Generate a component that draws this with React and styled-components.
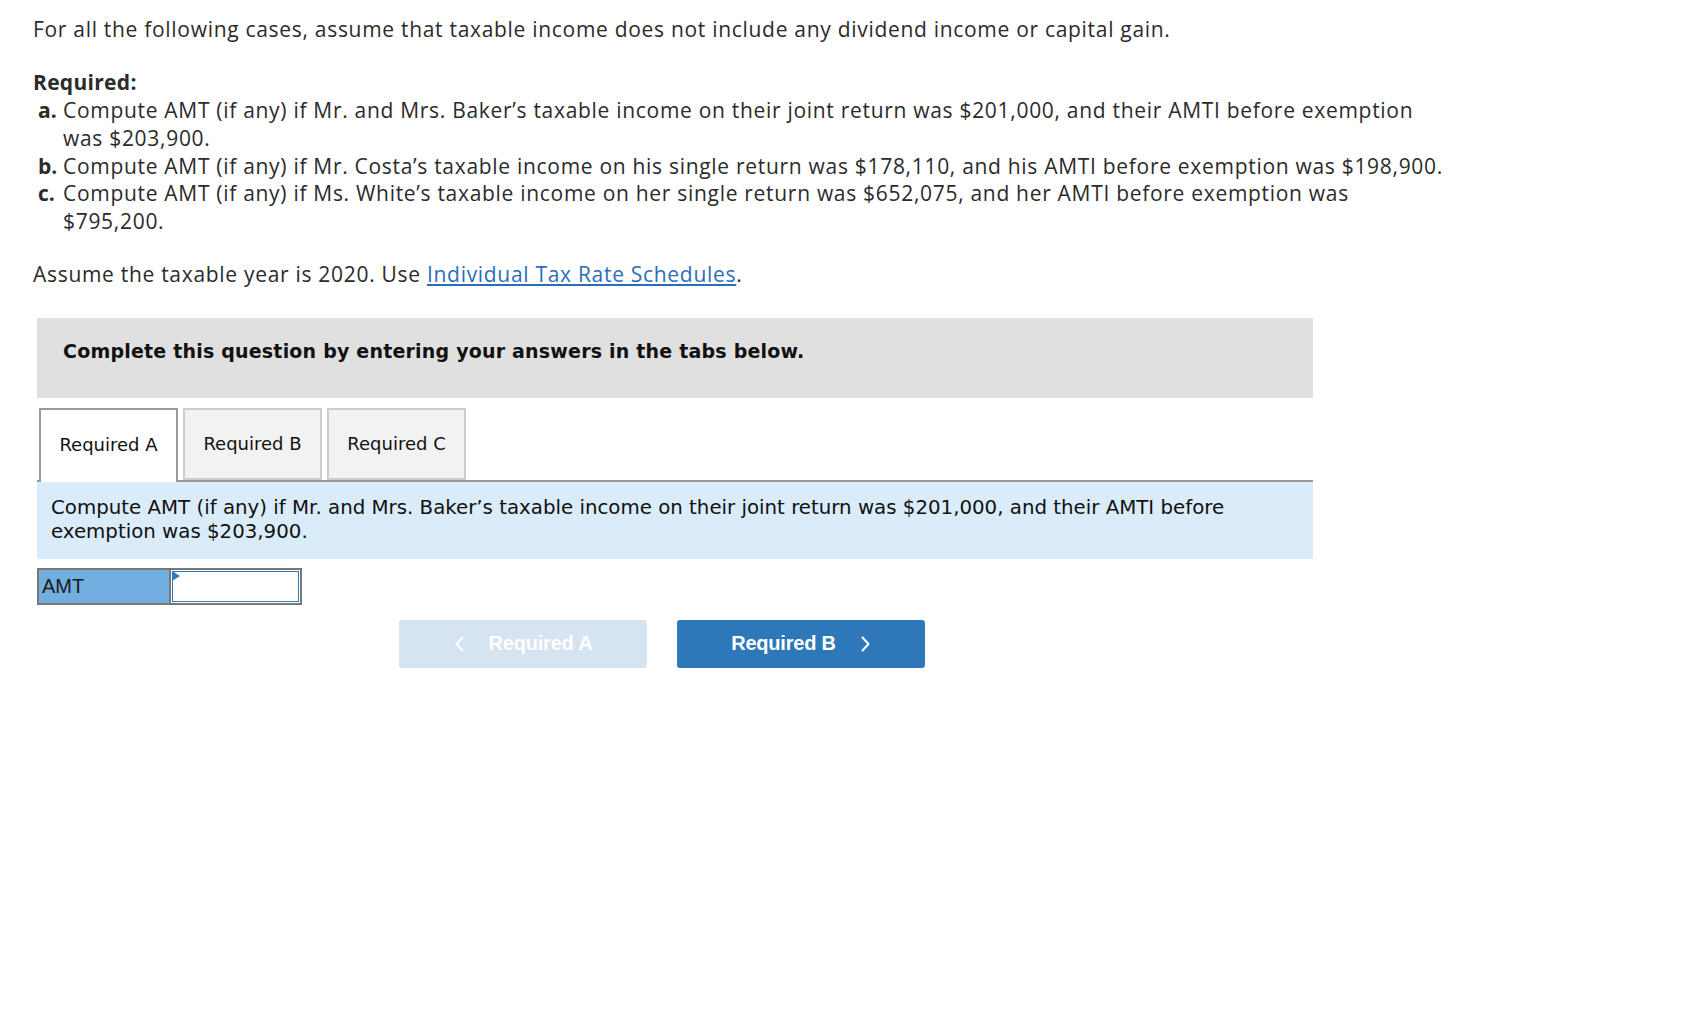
import React from 'react';
import styled, { createGlobalStyle } from 'styled-components';

const GlobalStyle = createGlobalStyle`
  body {
    margin: 0;
    background: #fff;
    font-family: 'Open Sans', 'Liberation Sans', sans-serif;
    color: #2b2b2b;
  }
`;

const Page = styled.div`
  padding: 16px 33px 40px;
  font-size: 21px;
  line-height: 27.8px;
  letter-spacing: 0.7px;
`;

const Para = styled.p`
  margin: 0;
  margin-top: ${(p) => p.$gap || 0}px;
`;

const Heading = styled.div`
  font-weight: 700;
  letter-spacing: 0.3px;
  margin-top: 25.5px;
`;

const List = styled.div`
  max-width: 1408px;
  padding-left: 5px;
`;

const Item = styled.div`
  display: flex;
`;

const Marker = styled.span`
  flex: 0 0 25px;
  font-weight: 700;
  letter-spacing: 0;
`;

const Link = styled.a`
  color: #2a6ebb;
  text-decoration: underline;
`;

const Widget = styled.div`
  width: 1276px;
  margin: 29px 0 0 4px;
  font-family: 'DejaVu Sans', Verdana, sans-serif;
  letter-spacing: 0;
`;

const Banner = styled.div`
  height: 80px;
  box-sizing: border-box;
  background: #e0e0e0;
  padding: 22px 26px 0;
  font-size: 19px;
  line-height: 22px;
  letter-spacing: 0.2px;
  font-weight: 700;
  color: #111;
`;

const TabRow = styled.div`
  display: flex;
  align-items: flex-end;
  gap: 5px;
  margin-top: 10px;
  padding-left: 2px;
  border-bottom: 2px solid #999;
  height: 72px;
`;

const Tab = styled.div`
  box-sizing: border-box;
  width: 139px;
  height: ${(p) => (p.$active ? 74 : 72)}px;
  margin-bottom: ${(p) => (p.$active ? -2 : 0)}px;
  display: flex;
  align-items: center;
  justify-content: center;
  padding-bottom: ${(p) => (p.$active ? 2 : 0)}px;
  background: ${(p) => (p.$active ? '#fff' : '#f2f2f2')};
  border: 2px solid ${(p) => (p.$active ? '#999' : '#ccc')};
  border-bottom: ${(p) => (p.$active ? 'none' : '2px solid #ccc')};
  font-size: 18px;
  color: #111;
`;

const Prompt = styled.div`
  background: #daecf9;
  padding: 14px 14px 14px 14px;
  font-size: 19.8px;
  line-height: 24.5px;
  color: #111;
`;

const AnswerRow = styled.div`
  display: flex;
  width: fit-content;
  margin-top: 9px;
  border: 2px solid #777;
  height: 37px;
  box-sizing: border-box;
`;

const Label = styled.div`
  box-sizing: border-box;
  width: 132px;
  background: #73aee0;
  border-right: 2px solid #777;
  font-family: 'Liberation Sans', Arial, sans-serif;
  font-size: 20px;
  line-height: 33px;
  padding-left: 3px;
  color: #1a1a1a;
`;

const InputCell = styled.div`
  position: relative;
  box-sizing: border-box;
  width: 129px;
  padding: 1px;
  background: #fff;
`;

const Input = styled.input`
  box-sizing: border-box;
  width: 100%;
  height: 100%;
  border: 1px solid #2f7bbf;
  outline: none;
  padding: 0 4px;
  font-size: 16px;
`;

const Flag = styled.span`
  position: absolute;
  left: 1px;
  top: 1px;
  width: 0;
  height: 0;
  border-top: 5px solid transparent;
  border-bottom: 5px solid transparent;
  border-left: 8px solid #2f7bbf;
`;

const Nav = styled.div`
  display: flex;
  gap: 30px;
  margin: 15px 0 0 362px;
`;

const NavButton = styled.button`
  width: 248px;
  height: 48px;
  border: none;
  border-radius: 3px;
  background: ${(p) => (p.$disabled ? '#d6e4f1' : '#2e77b8')};
  color: #fff;
  font-family: 'Liberation Sans', Arial, sans-serif;
  font-weight: 700;
  font-size: 20px;
  letter-spacing: -0.2px;
  display: flex;
  align-items: center;
  justify-content: center;
  gap: 24px;
  cursor: ${(p) => (p.$disabled ? 'default' : 'pointer')};
`;

const Chevron = ({ dir }) => (
  <svg width="11" height="18" viewBox="0 0 11 18" fill="none">
    <path
      d={dir === 'left' ? 'M8.5 2.5 L2.5 9 L8.5 15.5' : 'M2.5 2.5 L8.5 9 L2.5 15.5'}
      stroke="#fff"
      strokeWidth="2"
      strokeLinecap="round"
      strokeLinejoin="round"
    />
  </svg>
);

export default function App() {
  return (
    <>
      <GlobalStyle />
      <Page>
        <Para>
          For all the following cases, assume that taxable income does not include any dividend
          income or capital gain.
        </Para>
        <Heading>Required:</Heading>
        <List>
          <Item>
            <Marker>a.</Marker>
            <span>
              Compute AMT (if any) if Mr. and Mrs. Baker’s taxable income on their joint return was
              $201,000, and their AMTI before exemption was $203,900.
            </span>
          </Item>
          <Item>
            <Marker>b.</Marker>
            <span>
              Compute AMT (if any) if Mr. Costa’s taxable income on his single return was $178,110,
              and his AMTI before exemption was $198,900.
            </span>
          </Item>
          <Item>
            <Marker>c.</Marker>
            <span>
              Compute AMT (if any) if Ms. White’s taxable income on her single return was $652,075,
              and her AMTI before exemption was $795,200.
            </span>
          </Item>
        </List>
        <Para $gap={25}>
          Assume the taxable year is 2020. Use <Link href="#">Individual Tax Rate Schedules</Link>.
        </Para>

        <Widget>
          <Banner>Complete this question by entering your answers in the tabs below.</Banner>
          <TabRow>
            <Tab $active>Required A</Tab>
            <Tab>Required B</Tab>
            <Tab>Required C</Tab>
          </TabRow>
          <Prompt>
            Compute AMT (if any) if Mr. and Mrs. Baker’s taxable income on their joint return was
            $201,000, and their AMTI before exemption was $203,900.
          </Prompt>
          <AnswerRow>
            <Label>AMT</Label>
            <InputCell>
              <Input type="text" aria-label="AMT" />
              <Flag />
            </InputCell>
          </AnswerRow>
          <Nav>
            <NavButton $disabled disabled>
              <Chevron dir="left" />
              Required A
            </NavButton>
            <NavButton>
              Required B
              <Chevron dir="right" />
            </NavButton>
          </Nav>
        </Widget>
      </Page>
    </>
  );
}
